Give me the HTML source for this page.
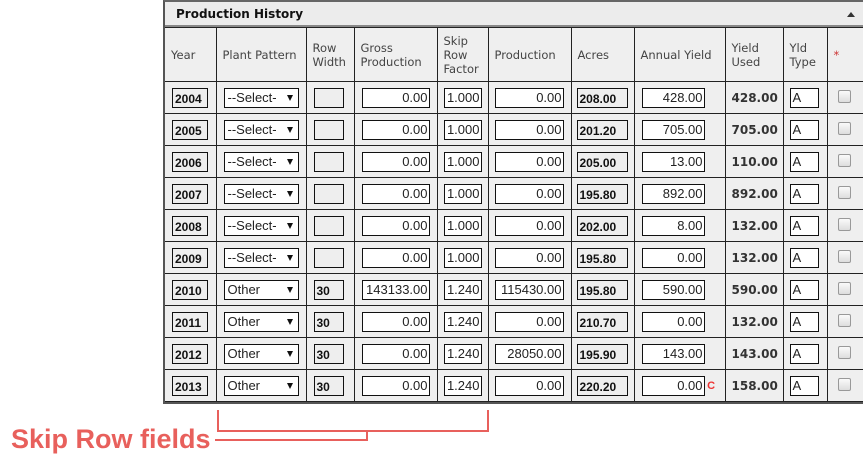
<!DOCTYPE html>
<html><head><style>
body{margin:0;width:863px;height:475px;background:#fff;font-family:"DejaVu Sans","Liberation Sans",sans-serif;position:relative;overflow:hidden}
.panel{position:absolute;left:163px;top:0;width:700px;height:404px;background:#efefef;border-left:2px solid #555;border-bottom:2px solid #555;border-top:2px solid #666;box-sizing:border-box}
.hdr{position:absolute;left:0;top:0;width:698px;height:25px;background:#ececec;border-bottom:2px solid #888;font:bold 12px "DejaVu Sans",sans-serif;color:#111;line-height:25px;padding-left:11px;box-sizing:border-box}
.arr{position:absolute;right:8px;top:10px;width:0;height:0;border-left:4px solid transparent;border-right:4px solid transparent;border-bottom:5px solid #333}
table{position:absolute;left:0;top:25px;border-collapse:collapse;table-layout:fixed;width:698px}
td,th{border:1px solid #222;padding:0;font-size:11.5px;color:#444;font-weight:normal;text-align:left;vertical-align:middle}
th{height:53px;padding-left:6px;line-height:14px}
td{height:31px}
tr td:first-child,tr th:first-child{border-left:none}
.b{display:inline-block;border:1px solid #111;background:#fff;box-sizing:border-box;height:20px;font:13px "Liberation Sans",sans-serif;line-height:18px;color:#222;text-align:right;padding-right:1px;vertical-align:middle}
.b.g{background:#eee;font:bold 12px "Liberation Sans",sans-serif;line-height:20px;text-align:left;padding-left:2px;color:#111}
.sel{text-align:left!important;padding-left:3px;position:relative}
.sel:after{content:"";position:absolute;right:5px;top:6px;border-left:3px solid transparent;border-right:3px solid transparent;border-top:6px solid #111}
.yu{font:bold 12px "DejaVu Sans",sans-serif;color:#333;padding-left:6px}
.cb{display:inline-block;width:11px;height:11px;border:1px solid #999;border-radius:2px;background:linear-gradient(#fafafa,#ddd);margin-left:10px}
.ann{position:absolute;background:#e8605c}
</style></head><body>
<div class="panel">
<div class="hdr">Production History<div class="arr"></div></div>
<table>
<colgroup><col style="width:51px"><col style="width:90px"><col style="width:48px"><col style="width:83px"><col style="width:51px"><col style="width:83px"><col style="width:63px"><col style="width:91px"><col style="width:58px"><col style="width:44px"><col style="width:36px"></colgroup>
<tr><th>Year</th><th>Plant Pattern</th><th>Row<br>Width</th><th>Gross<br>Production</th><th>Skip<br>Row<br>Factor</th><th>Production</th><th>Acres</th><th>Annual Yield</th><th>Yield<br>Used</th><th>Yld<br>Type</th><th style="color:#c33">*</th></tr>
<tr><td style="padding-left:7px"><span class="b g" style="width:36px">2004</span></td><td style="padding-left:7px"><span class="b sel" style="width:75px">--Select-</span></td><td style="padding-left:7px"><span class="b" style="width:30px;background:#eee"></span></td><td style="padding-left:7px"><span class="b" style="width:68px">0.00</span></td><td style="padding-left:6px"><span class="b" style="width:38px">1.000</span></td><td style="padding-left:6px"><span class="b" style="width:69px">0.00</span></td><td style="padding-left:5px"><span class="b g" style="width:51px">208.00</span></td><td style="padding-left:7px"><span class="b" style="width:63px">428.00</span></td><td class="yu">428.00</td><td style="padding-left:6px"><span class="b" style="width:29px;text-align:left;padding-left:2px">A</span></td><td><span class="cb"></span></td></tr>
<tr><td style="padding-left:7px"><span class="b g" style="width:36px">2005</span></td><td style="padding-left:7px"><span class="b sel" style="width:75px">--Select-</span></td><td style="padding-left:7px"><span class="b" style="width:30px;background:#eee"></span></td><td style="padding-left:7px"><span class="b" style="width:68px">0.00</span></td><td style="padding-left:6px"><span class="b" style="width:38px">1.000</span></td><td style="padding-left:6px"><span class="b" style="width:69px">0.00</span></td><td style="padding-left:5px"><span class="b g" style="width:51px">201.20</span></td><td style="padding-left:7px"><span class="b" style="width:63px">705.00</span></td><td class="yu">705.00</td><td style="padding-left:6px"><span class="b" style="width:29px;text-align:left;padding-left:2px">A</span></td><td><span class="cb"></span></td></tr>
<tr><td style="padding-left:7px"><span class="b g" style="width:36px">2006</span></td><td style="padding-left:7px"><span class="b sel" style="width:75px">--Select-</span></td><td style="padding-left:7px"><span class="b" style="width:30px;background:#eee"></span></td><td style="padding-left:7px"><span class="b" style="width:68px">0.00</span></td><td style="padding-left:6px"><span class="b" style="width:38px">1.000</span></td><td style="padding-left:6px"><span class="b" style="width:69px">0.00</span></td><td style="padding-left:5px"><span class="b g" style="width:51px">205.00</span></td><td style="padding-left:7px"><span class="b" style="width:63px">13.00</span></td><td class="yu">110.00</td><td style="padding-left:6px"><span class="b" style="width:29px;text-align:left;padding-left:2px">A</span></td><td><span class="cb"></span></td></tr>
<tr><td style="padding-left:7px"><span class="b g" style="width:36px">2007</span></td><td style="padding-left:7px"><span class="b sel" style="width:75px">--Select-</span></td><td style="padding-left:7px"><span class="b" style="width:30px;background:#eee"></span></td><td style="padding-left:7px"><span class="b" style="width:68px">0.00</span></td><td style="padding-left:6px"><span class="b" style="width:38px">1.000</span></td><td style="padding-left:6px"><span class="b" style="width:69px">0.00</span></td><td style="padding-left:5px"><span class="b g" style="width:51px">195.80</span></td><td style="padding-left:7px"><span class="b" style="width:63px">892.00</span></td><td class="yu">892.00</td><td style="padding-left:6px"><span class="b" style="width:29px;text-align:left;padding-left:2px">A</span></td><td><span class="cb"></span></td></tr>
<tr><td style="padding-left:7px"><span class="b g" style="width:36px">2008</span></td><td style="padding-left:7px"><span class="b sel" style="width:75px">--Select-</span></td><td style="padding-left:7px"><span class="b" style="width:30px;background:#eee"></span></td><td style="padding-left:7px"><span class="b" style="width:68px">0.00</span></td><td style="padding-left:6px"><span class="b" style="width:38px">1.000</span></td><td style="padding-left:6px"><span class="b" style="width:69px">0.00</span></td><td style="padding-left:5px"><span class="b g" style="width:51px">202.00</span></td><td style="padding-left:7px"><span class="b" style="width:63px">8.00</span></td><td class="yu">132.00</td><td style="padding-left:6px"><span class="b" style="width:29px;text-align:left;padding-left:2px">A</span></td><td><span class="cb"></span></td></tr>
<tr><td style="padding-left:7px"><span class="b g" style="width:36px">2009</span></td><td style="padding-left:7px"><span class="b sel" style="width:75px">--Select-</span></td><td style="padding-left:7px"><span class="b" style="width:30px;background:#eee"></span></td><td style="padding-left:7px"><span class="b" style="width:68px">0.00</span></td><td style="padding-left:6px"><span class="b" style="width:38px">1.000</span></td><td style="padding-left:6px"><span class="b" style="width:69px">0.00</span></td><td style="padding-left:5px"><span class="b g" style="width:51px">195.80</span></td><td style="padding-left:7px"><span class="b" style="width:63px">0.00</span></td><td class="yu">132.00</td><td style="padding-left:6px"><span class="b" style="width:29px;text-align:left;padding-left:2px">A</span></td><td><span class="cb"></span></td></tr>
<tr><td style="padding-left:7px"><span class="b g" style="width:36px">2010</span></td><td style="padding-left:7px"><span class="b sel" style="width:75px">Other</span></td><td style="padding-left:7px"><span class="b g" style="width:30px">30</span></td><td style="padding-left:7px"><span class="b" style="width:68px">143133.00</span></td><td style="padding-left:6px"><span class="b" style="width:38px">1.240</span></td><td style="padding-left:6px"><span class="b" style="width:69px">115430.00</span></td><td style="padding-left:5px"><span class="b g" style="width:51px">195.80</span></td><td style="padding-left:7px"><span class="b" style="width:63px">590.00</span></td><td class="yu">590.00</td><td style="padding-left:6px"><span class="b" style="width:29px;text-align:left;padding-left:2px">A</span></td><td><span class="cb"></span></td></tr>
<tr><td style="padding-left:7px"><span class="b g" style="width:36px">2011</span></td><td style="padding-left:7px"><span class="b sel" style="width:75px">Other</span></td><td style="padding-left:7px"><span class="b g" style="width:30px">30</span></td><td style="padding-left:7px"><span class="b" style="width:68px">0.00</span></td><td style="padding-left:6px"><span class="b" style="width:38px">1.240</span></td><td style="padding-left:6px"><span class="b" style="width:69px">0.00</span></td><td style="padding-left:5px"><span class="b g" style="width:51px">210.70</span></td><td style="padding-left:7px"><span class="b" style="width:63px">0.00</span></td><td class="yu">132.00</td><td style="padding-left:6px"><span class="b" style="width:29px;text-align:left;padding-left:2px">A</span></td><td><span class="cb"></span></td></tr>
<tr><td style="padding-left:7px"><span class="b g" style="width:36px">2012</span></td><td style="padding-left:7px"><span class="b sel" style="width:75px">Other</span></td><td style="padding-left:7px"><span class="b g" style="width:30px">30</span></td><td style="padding-left:7px"><span class="b" style="width:68px">0.00</span></td><td style="padding-left:6px"><span class="b" style="width:38px">1.240</span></td><td style="padding-left:6px"><span class="b" style="width:69px">28050.00</span></td><td style="padding-left:5px"><span class="b g" style="width:51px">195.90</span></td><td style="padding-left:7px"><span class="b" style="width:63px">143.00</span></td><td class="yu">143.00</td><td style="padding-left:6px"><span class="b" style="width:29px;text-align:left;padding-left:2px">A</span></td><td><span class="cb"></span></td></tr>
<tr><td style="padding-left:7px"><span class="b g" style="width:36px">2013</span></td><td style="padding-left:7px"><span class="b sel" style="width:75px">Other</span></td><td style="padding-left:7px"><span class="b g" style="width:30px">30</span></td><td style="padding-left:7px"><span class="b" style="width:68px">0.00</span></td><td style="padding-left:6px"><span class="b" style="width:38px">1.240</span></td><td style="padding-left:6px"><span class="b" style="width:69px">0.00</span></td><td style="padding-left:5px"><span class="b g" style="width:51px">220.20</span></td><td style="padding-left:7px;white-space:nowrap"><span class="b" style="width:63px">0.00</span> <span style="color:#e33;font:bold 11px sans-serif;margin-left:-1px">C</span></td><td class="yu">158.00</td><td style="padding-left:6px"><span class="b" style="width:29px;text-align:left;padding-left:2px">A</span></td><td><span class="cb"></span></td></tr>
</table>
</div>
<div class="ann" style="left:217px;top:410px;width:2px;height:22px"></div>
<div class="ann" style="left:487px;top:410px;width:2px;height:22px"></div>
<div class="ann" style="left:217px;top:430px;width:272px;height:2px"></div>
<div class="ann" style="left:366px;top:430px;width:2px;height:11px"></div>
<div class="ann" style="left:215px;top:439px;width:153px;height:2px"></div>
<div style="position:absolute;left:11px;top:424px;font:bold 27px 'Liberation Sans',sans-serif;color:#e8605c">Skip Row fields</div>
</body></html>
